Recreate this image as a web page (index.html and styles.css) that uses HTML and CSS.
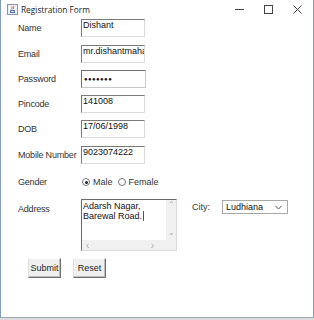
FILE: index.html
```html
<!DOCTYPE html>
<html lang="en">
<head>
  <meta charset="UTF-8">
  <title>Registration Form</title>
  <link rel="stylesheet" href="styles.css">
</head>
<body>

<div class="window">
  <div class="titlebar">
    <svg class="app-icon" width="11" height="11" viewBox="0 0 11 11">
      <rect x="0.5" y="0.5" width="10" height="10" fill="#eef2f8" stroke="#8a94a6"/>
      <path d="M3 8.5h5M3.5 6.5h4l-.5 2h-3z" stroke="#4a6fa5" fill="none"/>
      <path d="M5 2.5c1 1-1 1.5 0 3M6.5 2c.8 1-.8 1.5 0 3" stroke="#d9642b" fill="none"/>
    </svg>
    <span class="title">Registration Form</span>
    <div class="controls">
      <svg width="9" height="9" viewBox="0 0 9 9"><path d="M0 4.5h9" stroke="#444"/></svg>
      <svg width="9" height="9" viewBox="0 0 9 9"><rect x="0.5" y="0.5" width="8" height="8" fill="none" stroke="#444"/></svg>
      <svg width="9" height="9" viewBox="0 0 9 9"><path d="M0.5 0.5l8 8M8.5 0.5l-8 8" stroke="#444"/></svg>
    </div>
  </div>

  <div class="form">
    <div class="row r1">
      <span class="label">Name</span>
      <div class="field">Dishant</div>
    </div>
    <div class="row r2">
      <span class="label">Email</span>
      <div class="field">mr.dishantmahaj</div>
    </div>
    <div class="row">
      <span class="label">Password</span>
      <div class="field pass">&#9679;&#9679;&#9679;&#9679;&#9679;&#9679;&#9679;</div>
    </div>
    <div class="row">
      <span class="label">Pincode</span>
      <div class="field">141008</div>
    </div>
    <div class="row">
      <span class="label">DOB</span>
      <div class="field">17/06/1998</div>
    </div>
    <div class="row r6">
      <span class="label">Mobile Number</span>
      <div class="field">9023074222</div>
    </div>
    <div class="row gender">
      <span class="label">Gender</span>
      <div class="radios">
        <span class="radio on"></span><span class="opt">Male</span>
        <span class="radio"></span><span class="opt">Female</span>
      </div>
    </div>
    <div class="row address">
      <span class="label">Address</span>
      <div class="textarea">
        <div class="ta-text">Adarsh Nagar,<br>Barewal Road.<span class="caret"></span></div>
        <div class="vscroll"><span>&#8963;</span><span>&#8964;</span></div>
        <div class="hscroll"><span>&lsaquo;</span><span>&rsaquo;</span></div>
      </div>
      <span class="city-label">City:</span>
      <div class="combo">
        <span>Ludhiana</span>
        <svg width="7" height="5" viewBox="0 0 7 5"><path d="M0.5 1l3 3 3-3" stroke="#555" fill="none"/></svg>
      </div>
    </div>
    <div class="buttons">
      <button class="btn">Submit</button>
      <button class="btn">Reset</button>
    </div>
  </div>
</div>

</body>
</html>
```

FILE: styles.css
```css
body {
  margin: 0;
  background: #dcdcdc;
  font-family: 'Liberation Sans', Arial, sans-serif;
  font-size: 9px;
  color: #333;
}

.window {
  width: 312px;
  height: 317px;
  background: #fff;
  border-left: 1px solid #7f9cc6;
  border-right: 1px solid #7f9cc6;
  border-bottom: 1px solid #9aa7b8;
  overflow: hidden;
}

.titlebar {
  height: 18px;
  display: flex;
  align-items: center;
  padding-left: 6px;
}

.app-icon {
  margin-right: 3px;
}

.title {
  font-family: 'Open Sans', sans-serif;
  font-size: 8.3px;
  color: #222;
}

.controls {
  margin-left: auto;
  display: flex;
  gap: 20px;
  margin-right: 11px;
}

.form {
  padding-left: 17px;
}

.row {
  display: flex;
  align-items: center;
  height: 18px;
  margin-top: 7px;
}

.row.r1 {
  margin-top: 1px;
}

.row.r2,
.row.r6 {
  margin-top: 8px;
}

.label {
  width: 63px;
  flex: none;
  white-space: nowrap;
  letter-spacing: -0.2px;
}

.field {
  width: 61px;
  height: 16px;
  border: 1px solid;
  border-color: #7a7a7a #dadada #dadada #7a7a7a;
  padding-left: 1px;
  line-height: 11px;
  color: #111;
  white-space: nowrap;
  overflow: hidden;
}

.field.pass {
  font-size: 6px;
  letter-spacing: 0.4px;
  line-height: 16px;
  padding-left: 2px;
  border-color: #6d6d6d #c8c8c8 #c8c8c8 #6d6d6d;
}

.row.gender {
  margin-top: 9px;
}

.radios {
  display: flex;
  align-items: center;
  margin-left: 1px;
}

.radio {
  width: 6px;
  height: 6px;
  border: 1px solid #777;
  border-radius: 50%;
  margin-right: 3px;
  position: relative;
}

.radio.on::after {
  content: '';
  position: absolute;
  left: 1.5px;
  top: 1.5px;
  width: 3px;
  height: 3px;
  border-radius: 50%;
  background: #222;
}

.opt {
  margin-right: 5px;
}

.row.address {
  height: 52px;
  align-items: flex-start;
  margin-top: 8px;
}

.row.address .label {
  margin-top: 5px;
}

.textarea {
  width: 94px;
  height: 50px;
  border: 1px solid;
  border-color: #6a6a6a #dadada #dadada #6a6a6a;
  display: grid;
  grid-template-columns: 1fr 10px;
  grid-template-rows: 1fr 10px;
}

.ta-text {
  padding: 1px 0 0 1px;
  line-height: 10px;
  color: #111;
}

.caret {
  display: inline-block;
  width: 1px;
  height: 10px;
  background: #555;
  vertical-align: -2px;
  margin-left: 1px;
}

.vscroll {
  background: #f0f0f0;
  display: flex;
  flex-direction: column;
  justify-content: space-between;
  align-items: center;
  color: #aaa;
  font-size: 8px;
  line-height: 8px;
  padding: 1px 0 3px;
}

.hscroll {
  background: #f0f0f0;
  grid-column: 1 / 3;
  display: flex;
  justify-content: space-between;
  align-items: center;
  color: #aaa;
  font-size: 10px;
  padding: 0 22px 0 4px;
}

.city-label {
  margin-left: 15px;
  margin-top: 3px;
  width: 30px;
}

.combo {
  box-sizing: border-box;
  width: 66px;
  height: 14px;
  margin-top: 1px;
  border: 1px solid #a8a8a8;
  display: flex;
  align-items: center;
  justify-content: space-between;
  padding: 0 5px 0 3px;
  color: #111;
}

.buttons {
  display: flex;
  gap: 12px;
  margin-top: 7px;
  padding-left: 10px;
}

.btn {
  width: 33px;
  height: 20px;
  padding: 0;
  font-family: 'Liberation Sans', Arial, sans-serif;
  font-size: 9px;
  color: #222;
  background: #f0f0f0;
  border: 1px solid;
  border-color: #fdfdfd #6f6f6f #6f6f6f #e0e0e0;
  box-shadow: inset -1px -1px 0 #bdbdbd;
}
```
